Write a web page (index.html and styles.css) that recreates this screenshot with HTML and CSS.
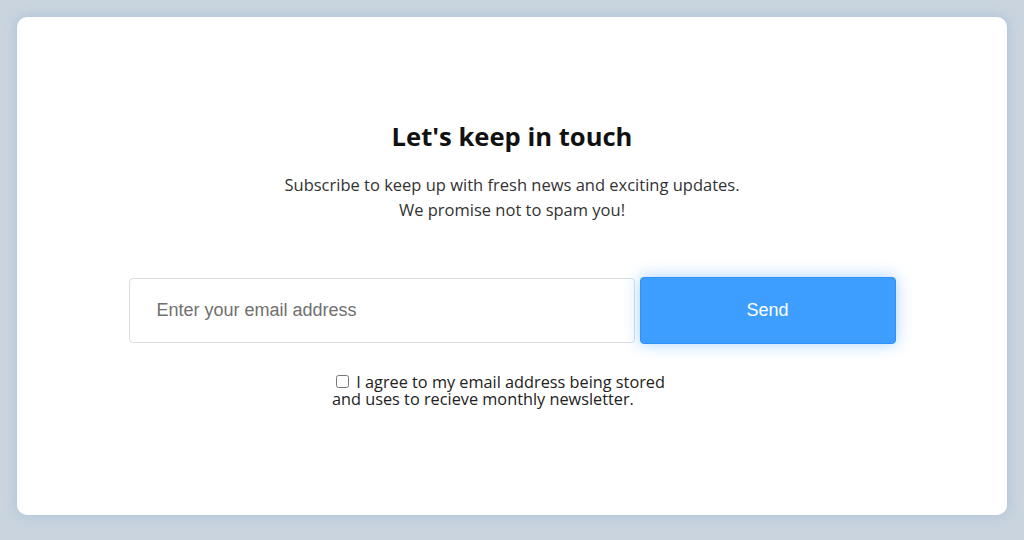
FILE: index.html
```html
<!DOCTYPE html>
<html>
<head>
<meta charset="utf-8">
<link rel="stylesheet" href="styles.css">
</head>
<body>
<div class="card">
  <h1 class="title">Let's keep in touch</h1>
  <p class="sub">Subscribe to keep up with fresh news and exciting updates.<br>We promise not to spam you!</p>
  <form class="form">
    <input class="email" type="text" placeholder="Enter your email address">
    <button class="send" type="button">Send</button>
  </form>
  <div class="agree"><input class="check" type="checkbox"> I agree to my email address being stored and uses to recieve monthly newsletter.</div>
</div>
</body>
</html>
```

FILE: styles.css
```css
html, body { margin: 0; padding: 0; }
body {
  background: #c9d4de;
  width: 1024px;
  height: 540px;
  padding: 17px;
  box-sizing: border-box;
  font-family: "Open Sans", Lato, sans-serif;
}
.card {
  background: #fff;
  border-radius: 10px;
  height: 498px;
  width: 990px;
  box-shadow: 0 0 12px rgba(150, 180, 215, 0.6);
  display: flex;
  flex-direction: column;
  align-items: center;
  padding-top: 103px;
  box-sizing: border-box;
}
.title {
  margin: 0;
  font-size: 25.6px;
  font-weight: 700;
  color: #111;
  line-height: 34px;
}
.sub {
  margin: 18px 0 0;
  font-size: 16.5px;
  line-height: 25px;
  color: #333;
  text-align: center;
}
.form {
  margin-top: 55px;
  display: flex;
  align-items: center;
  gap: 5px;
}
.email {
  width: 506px;
  height: 65px;
  box-sizing: border-box;
  border: 1px solid #dadde2;
  border-radius: 4px;
  padding: 0 27px;
  font-family: "Liberation Sans", Arial, sans-serif;
  font-size: 18px;
  color: #333;
  outline: none;
}
.email::placeholder { color: #707070; }
.send {
  width: 256px;
  height: 67px;
  background: #3d9eff;
  border: 1px solid #2b93fb;
  border-radius: 4px;
  color: #fff;
  font-family: "Liberation Sans", Arial, sans-serif;
  font-size: 18px;
  box-shadow: 0 0 16px rgba(61, 158, 255, 0.45);
}
.agree {
  margin-top: 30px;
  width: 360px;
  font-size: 16.3px;
  line-height: 17px;
  color: #222;
}
.check {
  margin: 0 3px 0 4px;
  width: 13px;
  height: 13px;
  vertical-align: 0;
}
```
